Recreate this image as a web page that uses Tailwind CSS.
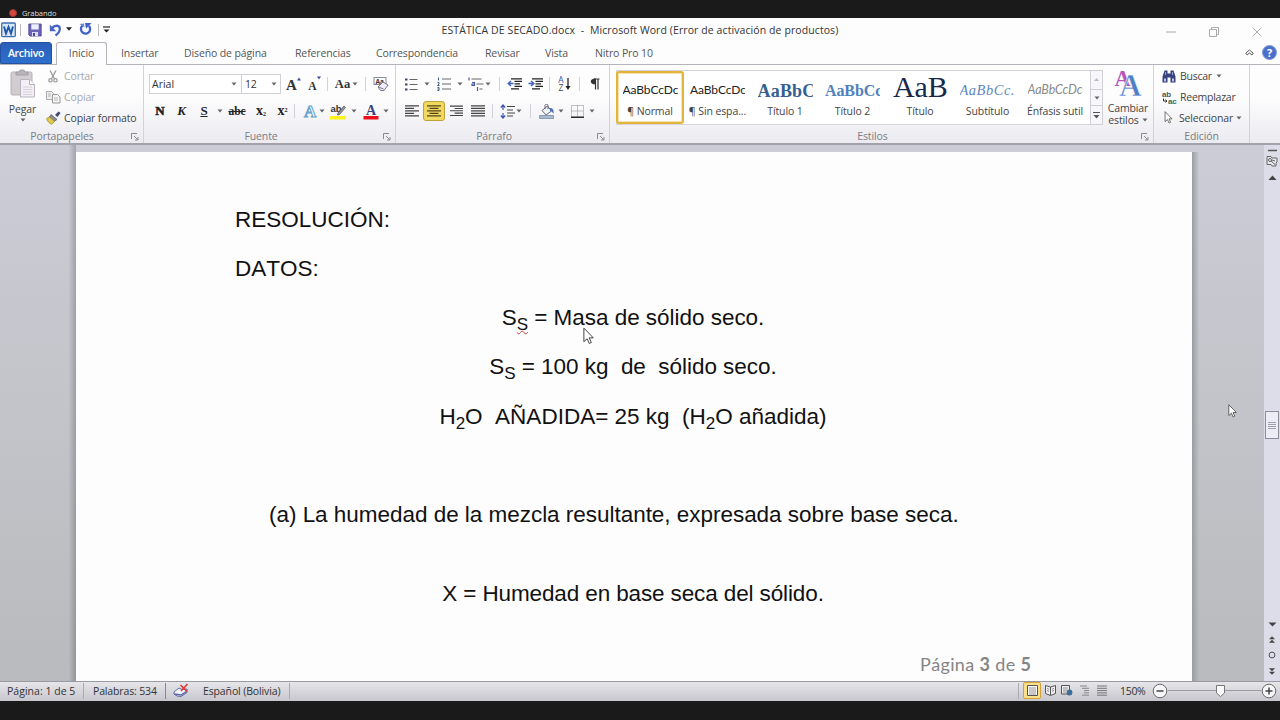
<!DOCTYPE html>
<html lang="es">
<head>
    <meta charset="UTF-8">
    <meta name="viewport" content="width=device-width, initial-scale=1.0">
    <title>ESTÁTICA DE SECADO.docx - Microsoft Word</title>
    <script src="https://cdn.jsdelivr.net/npm/@tailwindcss/browser@4"></script>
</head>
<body class="w-[1280px] h-[720px] overflow-hidden bg-[#1a1a1a] font-['Open_Sans','Noto_Sans',sans-serif] text-[10.5px] leading-[12px] text-[#444]">
    <!-- Shared symbols -->
    <svg class="hidden">
        <symbol id="caret" viewBox="0 0 6 4"><path d="M.5.5h5L3 3.5z" fill="#666"/></symbol>
        <symbol id="launcher" viewBox="0 0 8 8"><path d="M.5 6V.5H6M3 3l4 4M7 4v3H4" fill="none" stroke="#8a8a94"/></symbol>
        <symbol id="pointer" viewBox="0 0 10 16"><path d="M.8.8v12.400l2.900-2.700 2 4.300 1.900-.9-2-4.200h3.800z" fill="#fff" stroke="#444" stroke-width=".9"/></symbol>
    </svg>

    <div class="flex flex-col h-full">
        <!-- Recording bar -->
        <div class="h-[18px] shrink-0 flex items-end pl-[9px] pb-px">
            <span class="w-[8px] h-[8px] rounded-full bg-[#d8453c] border border-[#8f3a35]"></span>
            <span class="ml-[5px] text-[7.5px] leading-[8px] text-[#ddd] tracking-[-.1px]">Grabando</span>
        </div>

        <!-- Title bar -->
        <div class="h-[24px] shrink-0 bg-[#fdfdfe] flex items-center relative">
            <svg class="ml-px" width="15" height="16" viewBox="0 0 15 16"><rect x=".7" y="1" width="13.600" height="13.600" rx="1" fill="#d9e8f7" stroke="#3c6fae" stroke-width="1.300"/><path d="M3 4.500l2 7 2.500-6.500 2.500 6.500 2-7" fill="none" stroke="#1f55a8" stroke-width="1.900"/></svg>
            <span class="w-px h-[12px] bg-[#bbb] ml-[3.500px]"></span>
            <svg class="ml-[7px] -mt-px" width="14" height="14" viewBox="0 0 14 14"><path d="M.8 1h12.400v12H2L.8 11.800z" fill="#6a62b4" stroke="#4b4590" stroke-width=".8"/><path d="M3.300 1.200h7.400v5.300H3.300z" fill="#efeffa"/><path d="M4 9h6v4H4z" fill="#dcdcf0"/><path d="M5 10h2v3H5z" fill="#4b4590"/></svg>
            <svg class="ml-[7px] -mt-px" width="13" height="14" viewBox="0 0 13 14"><path d="M2.500 5.500C6 1.500 11 2 10.800 6c-.2 3-2 5-4.300 6.500" fill="none" stroke="#4a66c2" stroke-width="2.300"/><path d="M.8 1.500v6.700h6.500z" fill="#4a66c2"/></svg>
            <svg class="ml-[4px] -mt-[3px]" width="6" height="4"><path d="M0 .3h6L3 3.700z" fill="#222"/></svg>
            <svg class="ml-[7px] -mt-[2px]" width="13" height="14" viewBox="0 0 13 14"><path d="M3.500 3.500C1.300 5.500 1.400 9 4 10.800c2.600 1.600 6 .5 6.900-2.200.5-2 .1-3.600-.9-4.900" fill="none" stroke="#3f62c4" stroke-width="2.300"/><path d="M6 1h6.500L7 6.800z" fill="#3f62c4"/><path d="M.5 2l4.500-.5.500 4z" fill="#6d86d2"/></svg>
            <span class="w-px h-[12px] bg-[#bbb] ml-[6px]"></span>
            <svg class="ml-[4px]" width="7" height="8"><path d="M0 1h7" stroke="#222" stroke-width="1.200"/><path d="M.5 3.500h6l-3 3z" fill="#222"/></svg>
            <div class="absolute left-0 right-0 top-[6px] text-center tracking-[.09px] text-[#333] whitespace-pre" id="doc-title">ESTÁTICA DE SECADO.docx  -  Microsoft Word (Error de activación de productos)</div>
            <div class="ml-auto mr-[18px] pt-[3px] flex items-center gap-[33px]">
                <svg width="10" height="10"><path d="M0 5h10" stroke="#aaa"/></svg>
                <svg width="10" height="10"><path d="M.5 2.500h7v7h-7zM2.500 2.500v-2h7v7h-2" fill="none" stroke="#aaa"/></svg>
                <svg width="10" height="10"><path d="M.5.5l9 9M9.500.5l-9 9" stroke="#aaa"/></svg>
            </div>
        </div>

        <!-- Ribbon tabs -->
        <div class="h-[23px] shrink-0 bg-[#fdfdfe] border-b border-[#b4b4ba] flex text-[#555] tracking-[-.12px]">
            <div class="w-[52px] h-[22px] rounded-t-[3px] bg-linear-to-b from-[#2a5fb8] to-[#2d6fce] border border-[#2552a0] text-white flex items-center justify-center font-semibold tracking-[-.3px]">Archivo</div>
            <div class="ml-[4px] w-[51px] h-[23px] rounded-t-[3px] bg-[#fdfdfe] border border-b-0 border-[#b4b4ba] flex items-center justify-center pb-[2px]">Inicio</div>
            <div class="flex items-center h-[22px] ml-[14px]">
                <span class="w-[63px]">Insertar</span>
                <span class="w-[111px]">Diseño de página</span>
                <span class="w-[81px]">Referencias</span>
                <span class="w-[109px]">Correspondencia</span>
                <span class="w-[60px]">Revisar</span>
                <span class="w-[50px]">Vista</span>
                <span>Nitro Pro 10</span>
            </div>
            <div class="ml-auto mr-[3px] -mt-px flex items-center gap-[8px]">
                <svg width="9" height="7"><path d="M.8 4.200L4.500.9l3.700 3.300-1.300 1.800-2.400-2.100-2.400 2.100z" fill="#fff" stroke="#555"/></svg>
                <span class="w-[15px] h-[15px] rounded-full bg-[#4a70c8] border border-[#7f9ada] text-white font-bold text-[11px] leading-[13px] text-center">?</span>
            </div>
        </div>

        <!-- Ribbon -->
        <div class="h-[80px] shrink-0 bg-linear-to-b from-[#fdfdfe] from-40% to-[#ebebf0] border-b-2 border-[#a2a2aa] flex">
            <!-- Portapapeles -->
            <div class="w-[144px] border-r border-[#d2d2d8] flex flex-col relative">
                <div class="flex h-[64px]">
                    <div class="w-[45px] pt-[4px] flex flex-col items-center">
                        <svg width="26" height="29" viewBox="0 0 26 29"><rect x="1" y="3" width="21" height="23" rx="1.500" fill="#d0ccd0" stroke="#b5b1b6"/><path d="M6 6V3h3l1-2h4l1 2h3v3z" fill="#b9b5ba" stroke="#9b979d" stroke-width=".8"/><path d="M10.500 10.500h9l5 5v12.500h-14z" fill="#f3eff6" stroke="#b9b3c0"/><path d="M19.500 10.500v5h5" fill="#fff" stroke="#b9b3c0"/><path d="M13 18h9M13 20.500h9M13 23h9M13 25.500h9" stroke="#cfc9d6" stroke-width=".8"/></svg>
                        <span class="mt-[5px] tracking-[-.1px]">Pegar</span>
                        <svg class="mt-[3px]" width="6" height="4"><use href="#caret"/></svg>
                    </div>
                    <div class="tracking-[-.15px]">
                        <div class="h-[22px] flex items-center text-[#a8a8ac]">
                            <svg class="ml-[3px] mr-[6px]" width="10" height="13" viewBox="0 0 10 13"><path d="M2 .5l4.300 8M8 .5L3.700 8.500" stroke="#999" stroke-width="1.300"/><circle cx="2.500" cy="10.300" r="1.700" fill="none" stroke="#999" stroke-width="1.200"/><circle cx="7.500" cy="10.300" r="1.700" fill="none" stroke="#999" stroke-width="1.200"/></svg>
                            <span>Cortar</span>
                        </div>
                        <div class="h-[20px] flex items-center text-[#a8a8ac]">
                            <svg class="ml-[1px] mr-[3px]" width="15" height="13" viewBox="0 0 15 13"><path d="M.5.5h5l2 2v6h-7z" fill="#eee" stroke="#aaa"/><path d="M6.500 3.500h5l2.500 2.500v6H6.500z" fill="#f5f5f5" stroke="#999"/><path d="M2 3h3M2 5h3M8 7h4M8 9h4" stroke="#aaa" stroke-width=".8"/></svg>
                            <span>Copiar</span>
                        </div>
                        <div class="h-[21px] flex items-center">
                            <svg class="ml-[1px] mr-[3px]" width="15" height="14" viewBox="0 0 15 14"><path d="M9 4l3.500-3.500 2 1.500-3 4z" fill="#444a70"/><path d="M5 3.500l6 5-3 2-5-4z" fill="#8d8d98" stroke="#555" stroke-width=".7"/><path d="M3.500 6l5 4.300-2.500 3C3 12.500 1 10 .5 7.500z" fill="#dfc94e" stroke="#9a8a28" stroke-width=".7"/></svg>
                            <span>Copiar formato</span>
                        </div>
                    </div>
                </div>
                <div class="text-center text-[#7c7c84] tracking-[-.1px] pr-[19px] pt-px">Portapapeles</div>
                <svg class="absolute right-[4px] bottom-[2px]" width="8" height="8"><use href="#launcher"/></svg>
            </div>

            <!-- Fuente -->
            <div class="w-[252px] border-r border-[#d2d2d8] flex flex-col relative">
                <div class="h-[20px] mt-[9px] ml-[5px] flex items-center text-[#333]">
                    <div class="w-[93px] h-[20px] border border-[#d0d0d6] bg-white flex items-center justify-between pl-[2px] pr-[4px]"><span>Arial</span><svg width="6" height="4"><use href="#caret"/></svg></div>
                    <div class="w-[40px] h-[20px] -ml-px border border-[#d0d0d6] bg-white flex items-center justify-between pl-[3px] pr-[3px]"><span class="tracking-[-.3px]">12</span><svg width="6" height="4"><use href="#caret"/></svg></div>
                    <div class="w-[22px] flex justify-center font-['Liberation_Serif',serif] font-bold text-[15px] pl-[3px]"><span class="pt-px">A</span><svg class="-mt-px" width="4" height="4"><path d="M0 3.500L2 .5l2 3z" fill="#3b4c9c"/></svg></div>
                    <div class="w-[21px] flex justify-center font-['Liberation_Serif',serif] font-bold text-[11.500px] pl-[2px]"><span class="pt-[3px]">A</span><svg class="-mt-px" width="4" height="4"><path d="M0 .5h4L2 3.500z" fill="#3b4c9c"/></svg></div>
                    <div class="w-px h-[14px] bg-[#d2d2d8] ml-[3px]"></div>
                    <div class="w-[37px] flex items-center justify-center gap-[2px] font-['Liberation_Serif',serif] font-bold text-[12.500px]">Aa<svg width="6" height="4"><use href="#caret"/></svg></div>
                    <div class="w-px h-[14px] bg-[#d2d2d8]"></div>
                    <svg class="ml-[7px]" width="16" height="16" viewBox="0 0 16 16"><rect x="1" y="1.500" width="12" height="7" fill="#fff" stroke="#889"/><text x="2.500" y="7.500" font-size="6.500" font-weight="700" fill="#334">Aa</text><path d="M5 11l5-5 5 3-4 5.500H7.500z" fill="#eef" stroke="#778"/><path d="M5.500 11l5 2" stroke="#778"/></svg>
                </div>
                <div class="h-[20px] mt-[7px] ml-[5px] flex items-center font-['Liberation_Serif',serif] font-bold text-[#222] text-[13px]">
                    <span class="w-[22px] text-center [-webkit-text-stroke:.5px]">N</span>
                    <span class="w-[21px] text-center italic">K</span>
                    <span class="w-[24px] text-center underline">S</span>
                    <svg class="ml-px" width="6" height="4"><use href="#caret"/></svg>
                    <span class="w-[28px] text-center line-through text-[11.500px]">abc</span>
                    <span class="w-[20px] text-center text-[14px] pb-px">x<sub class="text-[6px]">2</sub></span>
                    <span class="w-[23px] text-center text-[14px] pb-px">x<sup class="text-[6px]">2</sup></span>
                    <span class="w-px h-[14px] bg-[#d2d2d8]"></span>
                    <svg class="ml-[8px]" width="16" height="16"><text x="1" y="13.500" font-size="17" font-family="Liberation Serif" fill="#eaf5fd" stroke="#6aa3cc" stroke-width="1">A</text></svg>
                    <svg width="6" height="4"><use href="#caret"/></svg>
                    <svg class="ml-[4px]" width="18" height="17" viewBox="0 0 18 17"><text x="1.500" y="8.500" font-size="9.500" font-family="Liberation Sans" font-weight="700" fill="#333">ab</text><path d="M15 3l1.500 1.500-6 7-2 .5.500-2z" fill="#999" stroke="#444" stroke-width=".7"/><path d="M1 13h16v3.500H1z" fill="#fdf31b"/></svg>
                    <svg class="ml-[4px]" width="6" height="4"><use href="#caret"/></svg>
                    <svg class="ml-[6px]" width="16" height="17" viewBox="0 0 16 17"><text x="3" y="11.500" font-size="14" font-family="Liberation Serif" font-weight="700" fill="#39447c">A</text><path d="M.5 13H15.500v3.500H.5z" fill="#e8121c"/></svg>
                    <svg class="ml-[4px]" width="6" height="4"><use href="#caret"/></svg>
                </div>
                <div class="text-center text-[#7c7c84] tracking-[-.1px] pr-[17px] pt-[9px]">Fuente</div>
                <svg class="absolute right-[4px] bottom-[2px]" width="8" height="8"><use href="#launcher"/></svg>
            </div>

            <!-- Párrafo -->
            <div class="w-[214px] border-r border-[#d2d2d8] flex flex-col relative">
                <div class="h-[20px] mt-[9px] flex items-center">
                    <svg class="ml-[9px]" width="13" height="13" viewBox="0 0 13 13"><path d="M0 1.500h2.500M0 6.500h2.500M0 11.500h2.500" stroke="#44446c" stroke-width="2"/><path d="M4.500 1.500h8M4.500 6.500h8M4.500 11.500h8" stroke="#666"/></svg>
                    <svg class="ml-[6px]" width="6" height="4"><use href="#caret"/></svg>
                    <svg class="ml-[7px]" width="14" height="14" viewBox="0 0 14 14"><path d="M1.500.5v3M.5 5.500h1.500v1.500L.5 8.500h2M.5 10.500h1.500v3H.5M.5 12h1.500" fill="none" stroke="#3f5a80"/><path d="M5 2h9M5 7h9M5 12h9" stroke="#666"/></svg>
                    <svg class="ml-[6px]" width="6" height="4"><use href="#caret"/></svg>
                    <svg class="ml-[5px]" width="17" height="14" viewBox="0 0 17 14"><path d="M1 .5v3M4 5.500h2.500v3H4v-1.500h2M9.500 10v4" fill="none" stroke="#4658a0" stroke-width="1.200"/><path d="M3.500 2h10M8.500 7h7M11.500 12h3" stroke="#666"/></svg>
                    <svg width="6" height="4"><use href="#caret"/></svg>
                    <div class="w-px h-[14px] bg-[#d2d2d8] ml-[8px]"></div>
                    <svg class="ml-[7px]" width="15" height="12" viewBox="0 0 15 12"><path d="M4 .8h11M7.500 3.300h7.500M7.500 5.800H13M7.500 8.300h7.500M4 10.800h8" stroke="#222" stroke-width="1.200"/><path d="M6.500 5.500H2M4 3L1.200 5.500 4 8" fill="none" stroke="#3f5fc0" stroke-width="1.400"/></svg>
                    <svg class="ml-[6px]" width="15" height="12" viewBox="0 0 15 12"><path d="M4 .8h11M7.500 3.300h7.500M7.500 5.800H13M7.500 8.300h7.500M4 10.800h8" stroke="#222" stroke-width="1.200"/><path d="M.5 5.500H5M3 3l2.800 2.500L3 8" fill="none" stroke="#3f5fc0" stroke-width="1.400"/></svg>
                    <div class="w-px h-[14px] bg-[#d2d2d8] ml-[6px]"></div>
                    <div class="ml-[7px] w-[15px] h-[16px] flex">
                        <div class="w-[8px] flex flex-col text-[8.500px] leading-[8px] text-center"><span class="text-[#3f4f9c]">A</span><span>Z</span></div>
                        <svg width="6" height="16"><path d="M3 2v10" stroke="#222" stroke-width="1.300"/><path d="M.5 10h5L3 14z" fill="#222"/></svg>
                    </div>
                    <div class="w-px h-[14px] bg-[#d2d2d8] ml-[7px]"></div>
                    <svg class="ml-[10px]" width="10" height="12" viewBox="0 0 10 12"><path d="M9.500 1H4M5.500 1v10.500M8 1v10.500" stroke="#333" stroke-width="1.200"/><path d="M5.500.5C-.8.3-.8 6.500 5.500 6.300z" fill="#333"/></svg>
                </div>
                <div class="h-[20px] mt-[7px] flex items-center">
                    <svg class="ml-[9px]" width="14" height="12" viewBox="0 0 14 12"><path d="M0 .8h14M0 3.300h9M0 5.800h14M0 8.300h9M0 10.800h14" stroke="#444" stroke-width="1.200"/></svg>
                    <div class="ml-[4px] w-[22px] h-[20px] rounded-[3px] bg-[#f0d95e] border border-[#bda23a] flex items-center justify-center"><svg width="14" height="12" viewBox="0 0 14 12"><path d="M0 .8h14M2.500 3.300h9M0 5.800h14M2.500 8.300h9M0 10.800h14" stroke="#54461c" stroke-width="1.200"/></svg></div>
                    <svg class="ml-[5px]" width="13" height="12" viewBox="0 0 14 12"><path d="M0 .8h14M5 3.300h9M0 5.800h14M5 8.300h9M0 10.800h14" stroke="#444" stroke-width="1.200"/></svg>
                    <svg class="ml-[8px]" width="14" height="12" viewBox="0 0 14 12"><path d="M0 .8h14M0 3.300h14M0 5.800h14M0 8.300h14M0 10.800h14" stroke="#444" stroke-width="1.200"/></svg>
                    <div class="w-px h-[14px] bg-[#d2d2d8] ml-[7px]"></div>
                    <svg class="ml-[7px]" width="15" height="15" viewBox="0 0 15 15"><path d="M3 1v5M3 9v5M.8 3.500L3 1l2.200 2.500M.8 11.500L3 14l2.200-2.500" fill="none" stroke="#3f55b0" stroke-width="1.200"/><path d="M7 2.500h8M7 6h6M7 9h8M7 12h6" stroke="#444"/></svg>
                    <svg class="ml-px" width="6" height="4"><use href="#caret"/></svg>
                    <div class="w-px h-[14px] bg-[#d2d2d8] ml-[8px]"></div>
                    <svg class="ml-[8px]" width="16" height="15" viewBox="0 0 16 15"><path d="M3 6.500l5.500-4.500 4 5-5.500 4z" fill="#eef2fa" stroke="#667"/><path d="M6 5V1.500C6-.2 9-.2 9 1.500V5" fill="none" stroke="#667"/><path d="M11 4c3 0 4 2 3.500 6-1-2-2-3-3.500-3z" fill="#4972b8"/><path d="M.5 11.500h14v3H.5z" fill="#a9bad0" stroke="#6d819c" stroke-width=".7"/></svg>
                    <svg class="ml-[3px]" width="6" height="4"><use href="#caret"/></svg>
                    <svg class="ml-[7px]" width="13" height="13" viewBox="0 0 13 13"><path d="M.5.5h12v11H.5zM6.500.5v11M.5 6h12" fill="none" stroke="#888" stroke-dasharray="1 1"/><path d="M0 12.300h13" stroke="#222" stroke-width="1.300"/></svg>
                    <svg class="ml-[5px]" width="6" height="4"><use href="#caret"/></svg>
                </div>
                <div class="text-center text-[#7c7c84] tracking-[-.1px] pr-[17px] pt-[9px]">Párrafo</div>
                <svg class="absolute right-[4px] bottom-[2px]" width="8" height="8"><use href="#launcher"/></svg>
            </div>

            <!-- Estilos -->
            <div class="w-[544px] border-r border-[#d2d2d8] flex flex-col relative">
                <div class="flex h-[61px] pt-[5px] pl-[6px]">
                    <div class="w-[475px] h-[55px] bg-white border border-[#d4d4da] flex tracking-[-.1px] text-[#444]">
                        <div class="w-[68px] h-[53px] -ml-px shrink-0 rounded-[3px] border-[2.500px] border-[#e3b43c] flex flex-col items-center overflow-hidden shadow-[inset_0_0_0_1px_#f9e3ae]">
                            <div class="h-[32px] w-[55px] pt-[11px] overflow-hidden font-[Lato] text-[12px] text-[#222] whitespace-nowrap">AaBbCcDc</div>
                            <span>¶ Normal</span>
                        </div>
                        <div class="w-[67px] h-[53px] shrink-0 flex flex-col items-center pt-[2px] overflow-hidden">
                            <div class="h-[32px] w-[55px] pt-[11px] overflow-hidden font-[Lato] text-[12px] text-[#222] whitespace-nowrap">AaBbCcDc</div>
                            <span class="whitespace-nowrap">¶ Sin espa...</span>
                        </div>
                        <div class="w-[68px] h-[53px] shrink-0 flex flex-col items-center pt-[2px] overflow-hidden">
                            <div class="h-[32px] w-[55px] pt-[8px] overflow-hidden font-['Liberation_Serif',serif] font-bold text-[18px] leading-[20px] tracking-[.2px] text-[#365f91] whitespace-nowrap">AaBbCc</div>
                            <span>Título 1</span>
                        </div>
                        <div class="w-[67px] h-[53px] shrink-0 flex flex-col items-center pt-[2px] overflow-hidden">
                            <div class="h-[32px] w-[55px] pt-[8px] overflow-hidden font-['Liberation_Serif',serif] font-bold text-[16px] leading-[20px] tracking-[-.1px] text-[#4f81bd] whitespace-nowrap">AaBbCc</div>
                            <span>Título 2</span>
                        </div>
                        <div class="w-[68px] h-[53px] shrink-0 flex flex-col items-center pt-[2px] overflow-hidden">
                            <div class="h-[32px] w-[54px] overflow-hidden font-['Liberation_Serif',serif] text-[30px] leading-[28px] text-[#17294a] whitespace-nowrap">AaB</div>
                            <span>Título</span>
                        </div>
                        <div class="w-[67px] h-[53px] shrink-0 flex flex-col items-center pt-[2px] overflow-hidden">
                            <div class="h-[32px] w-[56px] pt-[7px] overflow-hidden font-['Liberation_Serif',serif] italic text-[14.500px] leading-[20px] tracking-[.5px] text-[#5f86bd] whitespace-nowrap">AaBbCc.</div>
                            <span>Subtítulo</span>
                        </div>
                        <div class="w-[68px] h-[53px] shrink-0 flex flex-col items-center pt-[2px] overflow-hidden">
                            <div class="h-[32px] w-[55px] pt-[11px] overflow-hidden font-[Lato] italic text-[12.500px] text-[#8a8a8a] whitespace-nowrap">AaBbCcDc</div>
                            <span class="whitespace-nowrap">Énfasis sutil</span>
                        </div>
                    </div>
                    <div class="w-[13px] h-[55px] -ml-px border border-[#cfcfd6] flex flex-col bg-[#f7f7fa]">
                        <div class="h-[18px] flex items-center justify-center"><svg width="5" height="3"><path d="M0 3L2.500 0 5 3z" fill="#bbb"/></svg></div>
                        <div class="h-[18px] border-y border-[#cfcfd6] flex items-center justify-center"><svg width="6" height="4"><use href="#caret"/></svg></div>
                        <div class="h-[18px] flex items-center justify-center"><svg width="7" height="7"><path d="M0 .5h7" stroke="#555"/><path d="M.5 3h6l-3 3.500z" fill="#555"/></svg></div>
                    </div>
                    <div class="w-[50px] flex flex-col items-center">
                        <svg width="28" height="28" viewBox="0 0 28 28"><text x="0" y="17" font-size="23" font-family="Liberation Serif" font-weight="700" fill="#b455bd">A</text><text x="5" y="26.500" font-size="32" font-family="Liberation Serif" font-weight="700" fill="#4f80c6" stroke="#fff" stroke-width=".5">A</text></svg>
                        <span class="mt-[5px] tracking-[-.15px]">Cambiar</span>
                        <span class="flex items-center gap-[3px] tracking-[-.1px]">estilos <svg width="6" height="4"><use href="#caret"/></svg></span>
                    </div>
                </div>
                <div class="text-center text-[#7c7c84] tracking-[-.1px] pr-[18px] pt-[4px]">Estilos</div>
                <svg class="absolute right-[4px] bottom-[2px]" width="8" height="8"><use href="#launcher"/></svg>
            </div>

            <!-- Edición -->
            <div class="w-[96px] border-r border-[#d2d2d8] flex flex-col tracking-[-.25px]">
                <div class="h-[64px] pl-[8px]">
                    <div class="h-[22px] flex items-center">
                        <svg class="mr-[4px]" width="14" height="13" viewBox="0 0 14 13"><path d="M2.500.5h3v3h3v-3h3l2 6v6H8.500v-5h-3v5H.5v-6z" fill="#39417e"/><path d="M2 8.500h2v3H2zM10 8.500h2v3h-2z" fill="#b9c2ea"/><path d="M3.500 2v3M10.500 2v3" stroke="#98a4dc"/></svg>
                        <span>Buscar</span><svg class="ml-[4px]" width="6" height="4"><use href="#caret"/></svg>
                    </div>
                    <div class="h-[20px] flex items-center">
                        <svg class="mr-[3px]" width="15" height="15" viewBox="0 0 15 15"><text x="0" y="7" font-size="8" font-family="Liberation Sans" font-weight="700" fill="#555">ab</text><text x="6" y="13.500" font-size="8" font-family="Liberation Sans" font-weight="700" fill="#287060">ac</text><path d="M1.500 8.500v2.500h3M3.500 9.500L5 11l-1.500 1.500" fill="none" stroke="#333"/></svg>
                        <span>Reemplazar</span>
                    </div>
                    <div class="h-[21px] flex items-center">
                        <svg class="ml-[2px] mr-[6px]" width="9" height="13"><use href="#pointer"/></svg>
                        <span class="tracking-[-.15px]">Seleccionar</span><svg class="ml-[3px]" width="6" height="4"><use href="#caret"/></svg>
                    </div>
                </div>
                <div class="text-center text-[#7c7c84] pt-px tracking-[-.1px]">Edición</div>
            </div>
        </div>

        <!-- Document area -->
        <div class="h-[536px] shrink-0 flex relative bg-linear-to-b from-[#cbccd6] via-[#c3c4c9] via-50% to-[#b9babe]">
            <div class="w-[76px] bg-linear-to-r from-transparent from-90% to-black/20"></div>
            <div class="w-[1116px] mt-[7px] bg-[#fdfdfe] font-['Liberation_Sans',Arial,sans-serif] [font-kerning:none] text-[22.500px] leading-[49px] text-[#111] whitespace-pre flex flex-col">
                <div class="h-[43px] shrink-0"></div>
                <div class="h-[49px] pl-[159px]">RESOLUCIÓN:</div>
                <div class="h-[49px] pl-[159px]">DATOS:</div>
                <div class="h-[49px] text-center pr-[2px] tracking-[-.03px]">S<span class="text-[17px] relative top-[5px] underline decoration-[#c04040] decoration-wavy decoration-[.7px] underline-offset-[0px]">S</span> = Masa de sólido seco.</div>
                <div class="h-[49px] text-center pr-[2px] tracking-[-.03px]">S<span class="text-[17px] relative top-[5px]">S</span> = 100 kg  de  sólido seco.</div>
                <div class="h-[49px] text-center pr-[2px] pt-px">H<span class="text-[17px] relative top-[5px]">2</span>O  AÑADIDA= 25 kg  (H<span class="text-[17px] relative top-[5px]">2</span>O añadida)</div>
                <div class="h-[49px]"></div>
                <div class="h-[49px] pl-[193px] pt-px tracking-[-.03px]">(a) La humedad de la mezcla resultante, expresada sobre base seca.</div>
                <div class="h-[49px] mt-[30px] text-center pr-[2px] pt-px tracking-[-.12px]">X = Humedad en base seca del sólido.</div>
                <div class="mt-auto h-[32px] pl-[844px] font-[Lato] text-[18px] leading-[30px] tracking-[.35px] text-[#858585]">Página <b>3</b> de <b>5</b></div>
            </div>
            <div class="w-[72px] mt-[7px] bg-linear-to-r from-[#9b9c9f] to-transparent to-10%"></div>

            <!-- Vertical scrollbar -->
            <div class="w-[16px] bg-[#dcdde8] flex flex-col items-center">
                <svg class="mt-[4px]" width="9" height="3"><path d="M0 1.500h9" stroke="#555" stroke-width="1.500"/></svg>
                <svg class="mt-[3px]" width="12" height="12" viewBox="0 0 12 12"><path d="M1 1.500h4l1 1.500h5v4l-1 1v3H6L5 9.500H1z" fill="#e8e8f0" stroke="#666"/><circle cx="4" cy="5" r="1.500" fill="none" stroke="#666"/><path d="M5 6l4 3.500M6 5l3 1" stroke="#666"/></svg>
                <svg class="mt-[8px]" width="9" height="5"><path d="M.5 5l4-4.500 4 4.500z" fill="#444"/></svg>
                <div class="mt-[231px] w-[14px] h-[28px] shrink-0 border border-[#8d8d9a] bg-[#ececf4] flex items-center justify-center"><svg width="8" height="8"><path d="M0 1.500h8M0 3.500h8M0 5.500h8M0 7.500h8" stroke="#8d8d9a" stroke-width=".8"/></svg></div>
                <svg class="mt-[183px] shrink-0" width="9" height="5"><path d="M.5.500h8l-4 4z" fill="#444"/></svg>
                <svg class="mt-[9px] shrink-0" width="6" height="7"><path d="M0 3.300L3 .3l3 3zM0 6.700l3-3 3 3z" fill="#444"/></svg>
                <svg class="mt-[8px] shrink-0" width="8" height="8"><circle cx="4" cy="4" r="2.900" fill="none" stroke="#555"/></svg>
                <svg class="mt-[9px] shrink-0" width="6" height="7"><path d="M0 .3h6l-3 3zM0 3.700h6l-3 3z" fill="#444"/></svg>
            </div>

            <!-- Mouse pointers -->
            <svg class="absolute left-[583px] top-[182px]" width="11" height="18"><use href="#pointer"/></svg>
            <svg class="absolute left-[1228px] top-[259px]" width="9" height="14"><use href="#pointer"/></svg>
        </div>

        <!-- Status bar -->
        <div class="h-[20px] shrink-0 bg-linear-to-b from-[#e6e6ea] to-[#c6c6cd] border-t border-[#9a9aa2] pb-[2px] flex items-center tracking-[-.05px] text-[#333]">
            <span class="w-[76px] pl-[7px] whitespace-nowrap tracking-[.02px]">Página: 1 de 5</span>
            <span class="w-px h-[16px] bg-[#aaaab0] ml-[7px]"></span>
            <span class="w-[72px] ml-[9px] whitespace-nowrap tracking-[-.15px]">Palabras: 534</span>
            <span class="w-px h-[16px] bg-[#888]"></span>
            <svg class="ml-[7px]" width="17" height="15" viewBox="0 0 17 15"><path d="M1 9l5-4 3 1.500L14 6v3.500L8 13.500 4 13 1 11z" fill="#f3f3fb" stroke="#5c68a8"/><path d="M1.500 11L8 12l6-4" fill="none" stroke="#5c68a8" stroke-width="1.500"/><path d="M7.500 2l6.500 6.500M14.500 1L8 8" stroke="#dd3b35" stroke-width="1.600"/></svg>
            <span class="ml-[13px] tracking-[-.13px]">Español (Bolivia)</span>
            <span class="w-px h-[16px] bg-[#aaaab0] ml-[9px]"></span>
            <div class="ml-auto flex items-center">
                <span class="w-px h-[16px] bg-[#aaaab0]"></span>
                <div class="ml-[4px] w-[18px] h-[17px] rounded-[2px] bg-[#fbe08c] border-[1.500px] border-[#d3a138] flex items-center justify-center"><svg width="11" height="11"><path d="M.5.5h10v10H.5z" fill="#fff" stroke="#555"/><path d="M2 3h7M2 5h7M2 7h7M2 9h7" stroke="#777" stroke-width=".8"/></svg></div>
                <svg class="ml-[4px]" width="11" height="11"><path d="M5.500 2L.5.500v8l5 2 5-2v-8zV10" fill="#eee" stroke="#555"/><path d="M2 3.500l2 .7M2 5.500l2 .7M7 4.200l2-.7M7 6.200l2-.7" stroke="#777" stroke-width=".8"/></svg>
                <svg class="ml-[5px]" width="12" height="11"><path d="M.5.500h8v8.500h-8z" fill="#eee" stroke="#555"/><path d="M2 3h5M2 5h4M2 7h3" stroke="#777" stroke-width=".8"/><circle cx="8.500" cy="7.500" r="2.900" fill="#3d6e98"/></svg>
                <svg class="ml-[7px]" width="9" height="11"><path d="M0 1h7M2 3.300h7M4 5.600h5M4 7.900h5M2 10.200h7" stroke="#888"/></svg>
                <svg class="ml-[8px]" width="10" height="11"><path d="M0 1h10M0 3.300h10M0 5.600h10M0 7.900h10M0 10.200h10" stroke="#777"/></svg>
                <span class="ml-[13px] w-[32px] tracking-[-.3px]">150%</span>
                <svg width="16" height="16"><circle cx="8" cy="8" r="6.800" fill="#f6f6f8" stroke="#666"/><path d="M4.500 8h7" stroke="#444" stroke-width="1.500"/></svg>
                <div class="w-[93px] h-[16px] flex items-center relative">
                    <span class="w-full h-px bg-[#9c9ca4]"></span>
                    <svg class="absolute left-[48px] top-[2px]" width="9" height="12"><path d="M.5.500h8v7.500l-4 3.500-4-3.500z" fill="#fafafa" stroke="#777"/></svg>
                </div>
                <svg class="mr-[3px]" width="16" height="16"><circle cx="8" cy="8" r="6.800" fill="#f6f6f8" stroke="#666"/><path d="M4.500 8h7M8 4.500v7" stroke="#444" stroke-width="1.500"/></svg>
            </div>
        </div>
    </div>
</body>
</html>
